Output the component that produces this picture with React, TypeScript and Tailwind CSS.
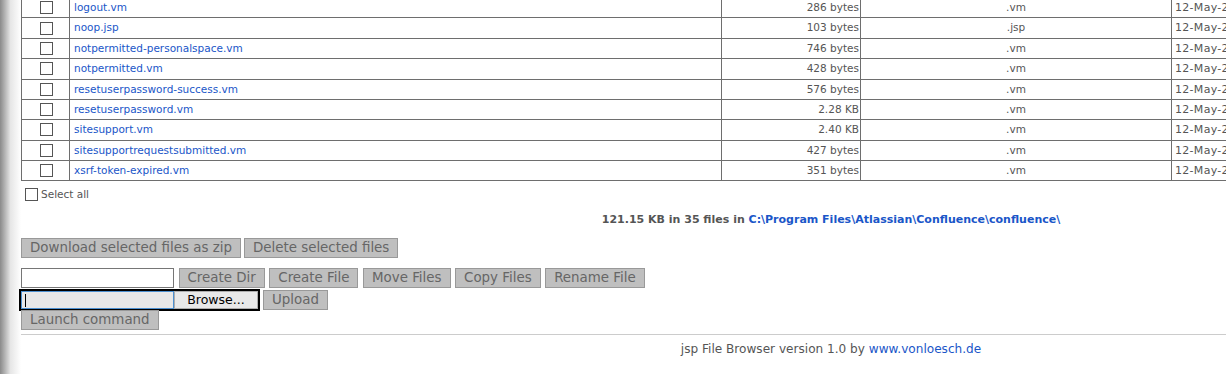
import React from 'react';

interface FileRow {
  name: string;
  size: string;
  type: string;
}

const files: FileRow[] = [
  { name: 'logout.vm', size: '286 bytes', type: '.vm' },
  { name: 'noop.jsp', size: '103 bytes', type: '.jsp' },
  { name: 'notpermitted-personalspace.vm', size: '746 bytes', type: '.vm' },
  { name: 'notpermitted.vm', size: '428 bytes', type: '.vm' },
  { name: 'resetuserpassword-success.vm', size: '576 bytes', type: '.vm' },
  { name: 'resetuserpassword.vm', size: '2.28 KB', type: '.vm' },
  { name: 'sitesupport.vm', size: '2.40 KB', type: '.vm' },
  { name: 'sitesupportrequestsubmitted.vm', size: '427 bytes', type: '.vm' },
  { name: 'xsrf-token-expired.vm', size: '351 bytes', type: '.vm' },
];

const font = { fontFamily: '"DejaVu Sans", Verdana, sans-serif' };

const Box: React.FC = () => (
  <span className="block w-[13px] h-[13px] border border-[#555] bg-white" />
);

const GrayButton: React.FC<{ label: string; className?: string }> = ({ label, className }) => (
  <button
    type="button"
    className={`h-[20px] px-[8px] bg-[#bfbfbf] border border-[#999] text-[#666] text-[13.4px] leading-[18px] whitespace-nowrap ${className || ''}`}
  >
    {label}
  </button>
);

const App: React.FC = () => {
  return (
    <div className="w-[1226px] h-[374px] overflow-hidden bg-white flex" style={font}>
      {/* window edge shadow */}
      <div className="w-[21px] shrink-0 h-full bg-gradient-to-r from-[#8a8a8a] via-[#e6e6e6] to-white" />

      <div className="w-[1620px] shrink-0 flex flex-col">
        {/* file table, scrolled so the first row is cut */}
        <div className="-mt-[2px] border-l border-[#6e6e6e]">
          {files.map((f) => (
            <div
              key={f.name}
              className="grid grid-cols-[47px_652px_139px_311px_1fr] h-[20.375px] border-b border-[#6e6e6e] text-[10.5px] leading-[19px]"
            >
              <div className="flex items-center justify-center pl-[1px]">
                <Box />
              </div>
              <div className="border-l border-[#6e6e6e] pl-[4px] text-[#1a56c8] whitespace-nowrap">{f.name}</div>
              <div className="border-l border-[#6e6e6e] text-right pr-[1px] text-[#555]">{f.size}</div>
              <div className="border-l border-[#6e6e6e] text-center text-[#555]">{f.type}</div>
              <div className="border-l border-[#6e6e6e] pl-[3px] text-[#555] text-[11px] tracking-[0.3px] whitespace-nowrap">
                12-May-2023 10:42
              </div>
            </div>
          ))}
        </div>

        {/* select all */}
        <div className="flex items-center h-[22px] mt-[2px] pl-[4px] gap-[3px] text-[10.5px] text-[#555]">
          <Box />
          <span>Select all</span>
        </div>

        {/* summary */}
        <div className="h-[28px] flex items-center justify-center text-[11px] font-bold text-[#555] whitespace-nowrap pt-[2px]">
          121.15 KB in 35 files in&nbsp;
          <span className="text-[#1a56c8]">C:\Program Files\Atlassian\Confluence\confluence\</span>
        </div>

        <div className="flex gap-[3px] mt-[5px]">
          <GrayButton label="Download selected files as zip" />
          <GrayButton label="Delete selected files" />
        </div>

        <div className="flex gap-[4.5px] mt-[10px] h-[20px]">
          <input
            type="text"
            readOnly
            className="w-[153px] h-[20px] border border-[#767676] bg-white outline-none"
          />
          <GrayButton label="Create Dir" />
          <GrayButton label="Create File" />
          <GrayButton label="Move Files" />
          <GrayButton label="Copy Files" />
          <GrayButton label="Rename File" />
        </div>

        {/* file upload */}
        <div className="flex gap-[3px] mt-[1px] items-start">
          <div className="-ml-[2px] flex border-2 border-black h-[22px]">
            <div className="w-[153px] h-[18px] border border-[#4d90d0] bg-[#e8e8e8] flex items-center pl-[3px]">
              <span className="block w-[1px] h-[13px] bg-black" />
            </div>
            <div className="w-[84px] h-[18px] border border-[#adadad] bg-[#e8e8e8] text-black text-[12.5px] leading-[16px] text-center">
              Browse...
            </div>
          </div>
          <GrayButton label="Upload" className="mt-[1px] h-[19px]" />
        </div>

        <div className="flex -mt-[1px]">
          <GrayButton label="Launch command" className="h-[19px]" />
        </div>

        <hr className="mt-[4px] border-0 border-t border-[#cccccc]" />

        <div className="h-[28px] flex items-center justify-center text-[12.1px] text-[#555] whitespace-nowrap">
          jsp File Browser version 1.0 by&nbsp;
          <span className="text-[#1a56c8]">www.vonloesch.de</span>
        </div>
      </div>
    </div>
  );
};

export default App;
